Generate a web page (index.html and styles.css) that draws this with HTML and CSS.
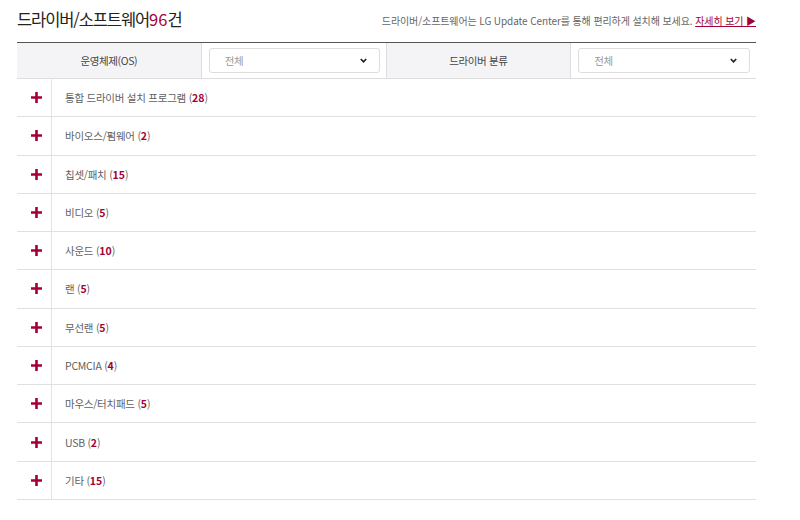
FILE: index.html
```html
<!DOCTYPE html>
<html lang="ko">
<head>
<meta charset="utf-8">
<link rel="stylesheet" href="styles.css">
</head>
<body>
<div class="wrap">
  <div class="head">
    <h2 class="title">드라이버/소프트웨어<span class="red">96</span>건</h2>
    <p class="notice">드라이버/소프트웨어는 LG Update Center를 통해 편리하게 설치해 보세요. <a href="#" class="more">자세히 보기 ▶</a></p>
  </div>
  <div class="filters">
    <div class="label">운영체제(OS)</div>
    <div class="selcell"><div class="select"><span>전체</span><svg class="chev" width="7" height="5" viewBox="0 0 7 5"><path d="M0.8 1 L3.5 3.8 L6.2 1" fill="none" stroke="#222" stroke-width="1.7"/></svg></div></div>
    <div class="label">드라이버 분류</div>
    <div class="selcell"><div class="select"><span>전체</span><svg class="chev" width="7" height="5" viewBox="0 0 7 5"><path d="M0.8 1 L3.5 3.8 L6.2 1" fill="none" stroke="#222" stroke-width="1.7"/></svg></div></div>
  </div>
  <ul class="list">
    <li class="row"><span class="ico"><svg width="11" height="11" viewBox="0 0 11 11"><path d="M5.5 0v11M0 5.5h11" stroke="#a50034" stroke-width="2.6"/></svg></span><span class="name">통합 드라이버 설치 프로그램 (<b>28</b>)</span></li>
    <li class="row"><span class="ico"><svg width="11" height="11" viewBox="0 0 11 11"><path d="M5.5 0v11M0 5.5h11" stroke="#a50034" stroke-width="2.6"/></svg></span><span class="name">바이오스/펌웨어 (<b>2</b>)</span></li>
    <li class="row"><span class="ico"><svg width="11" height="11" viewBox="0 0 11 11"><path d="M5.5 0v11M0 5.5h11" stroke="#a50034" stroke-width="2.6"/></svg></span><span class="name">칩셋/패치 (<b>15</b>)</span></li>
    <li class="row"><span class="ico"><svg width="11" height="11" viewBox="0 0 11 11"><path d="M5.5 0v11M0 5.5h11" stroke="#a50034" stroke-width="2.6"/></svg></span><span class="name">비디오 (<b>5</b>)</span></li>
    <li class="row"><span class="ico"><svg width="11" height="11" viewBox="0 0 11 11"><path d="M5.5 0v11M0 5.5h11" stroke="#a50034" stroke-width="2.6"/></svg></span><span class="name">사운드 (<b>10</b>)</span></li>
    <li class="row"><span class="ico"><svg width="11" height="11" viewBox="0 0 11 11"><path d="M5.5 0v11M0 5.5h11" stroke="#a50034" stroke-width="2.6"/></svg></span><span class="name">랜 (<b>5</b>)</span></li>
    <li class="row"><span class="ico"><svg width="11" height="11" viewBox="0 0 11 11"><path d="M5.5 0v11M0 5.5h11" stroke="#a50034" stroke-width="2.6"/></svg></span><span class="name">무선랜 (<b>5</b>)</span></li>
    <li class="row"><span class="ico"><svg width="11" height="11" viewBox="0 0 11 11"><path d="M5.5 0v11M0 5.5h11" stroke="#a50034" stroke-width="2.6"/></svg></span><span class="name">PCMCIA (<b>4</b>)</span></li>
    <li class="row"><span class="ico"><svg width="11" height="11" viewBox="0 0 11 11"><path d="M5.5 0v11M0 5.5h11" stroke="#a50034" stroke-width="2.6"/></svg></span><span class="name">마우스/터치패드 (<b>5</b>)</span></li>
    <li class="row"><span class="ico"><svg width="11" height="11" viewBox="0 0 11 11"><path d="M5.5 0v11M0 5.5h11" stroke="#a50034" stroke-width="2.6"/></svg></span><span class="name">USB (<b>2</b>)</span></li>
    <li class="row"><span class="ico"><svg width="11" height="11" viewBox="0 0 11 11"><path d="M5.5 0v11M0 5.5h11" stroke="#a50034" stroke-width="2.6"/></svg></span><span class="name">기타 (<b>15</b>)</span></li>
  </ul>
</div>
</body>
</html>
```

FILE: styles.css
```css
html, body {
  margin: 0;
  padding: 0;
  background: #fff;
}
body {
  font-family: "Noto Sans CJK KR", "Noto Sans", sans-serif;
  color: #555;
}
.wrap {
  width: 739px;
  margin-left: 17px;
}
.head {
  height: 42px;
  display: flex;
  align-items: center;
  justify-content: space-between;
}
.title {
  margin: 0;
  font-size: 16.5px;
  font-weight: 400;
  color: #222;
  letter-spacing: -1.1px;
  line-height: 1;
  padding-bottom: 3px;
}
.red {
  color: #a50034;
  letter-spacing: 0;
}
.notice {
  margin: 0;
  font-size: 10px;
  color: #666;
  letter-spacing: -0.1px;
  padding-bottom: 2px;
}
.more {
  color: #a50034;
  text-decoration: underline;
}
.filters {
  display: grid;
  grid-template-columns: repeat(4, 1fr);
  border-top: 1px solid #555;
  border-bottom: 1px solid #ddd;
  height: 37px;
  box-sizing: border-box;
}
.label {
  background: #f4f4f6;
  display: flex;
  align-items: center;
  justify-content: center;
  font-size: 10.5px;
  color: #444;
  letter-spacing: -0.4px;
  border-right: 1px solid #ddd;
}
.selcell {
  display: flex;
  align-items: center;
  padding: 0 6px 0 7px;
  border-right: 1px solid #ddd;
}
.selcell:last-child {
  border-right: 0;
}
.select {
  flex: 1;
  height: 25px;
  box-sizing: border-box;
  border: 1px solid #ddd;
  border-radius: 3px;
  display: flex;
  align-items: center;
  justify-content: space-between;
  padding: 0 12px 0 15px;
  font-size: 10.5px;
  color: #999;
  letter-spacing: -0.5px;
  background: #fff;
}
.chev {
  display: block;
}
.list {
  list-style: none;
  margin: 0;
  padding: 0;
}
.row {
  display: flex;
  height: 38.27px;
  box-sizing: border-box;
  border-bottom: 1px solid #e0e0e0;
}
.ico {
  width: 35px;
  border-right: 1px solid #e4e4e4;
  display: flex;
  align-items: center;
  justify-content: center;
  padding-left: 4px;
  box-sizing: border-box;
}
.ico svg {
  display: block;
}
.name {
  display: flex;
  align-items: center;
  padding-left: 13px;
  font-size: 10.5px;
  color: #5f5f5f;
  letter-spacing: -0.25px;
  white-space: pre;
}
.name b {
  color: #a50034;
  font-weight: 700;
  letter-spacing: 0;
}
```
